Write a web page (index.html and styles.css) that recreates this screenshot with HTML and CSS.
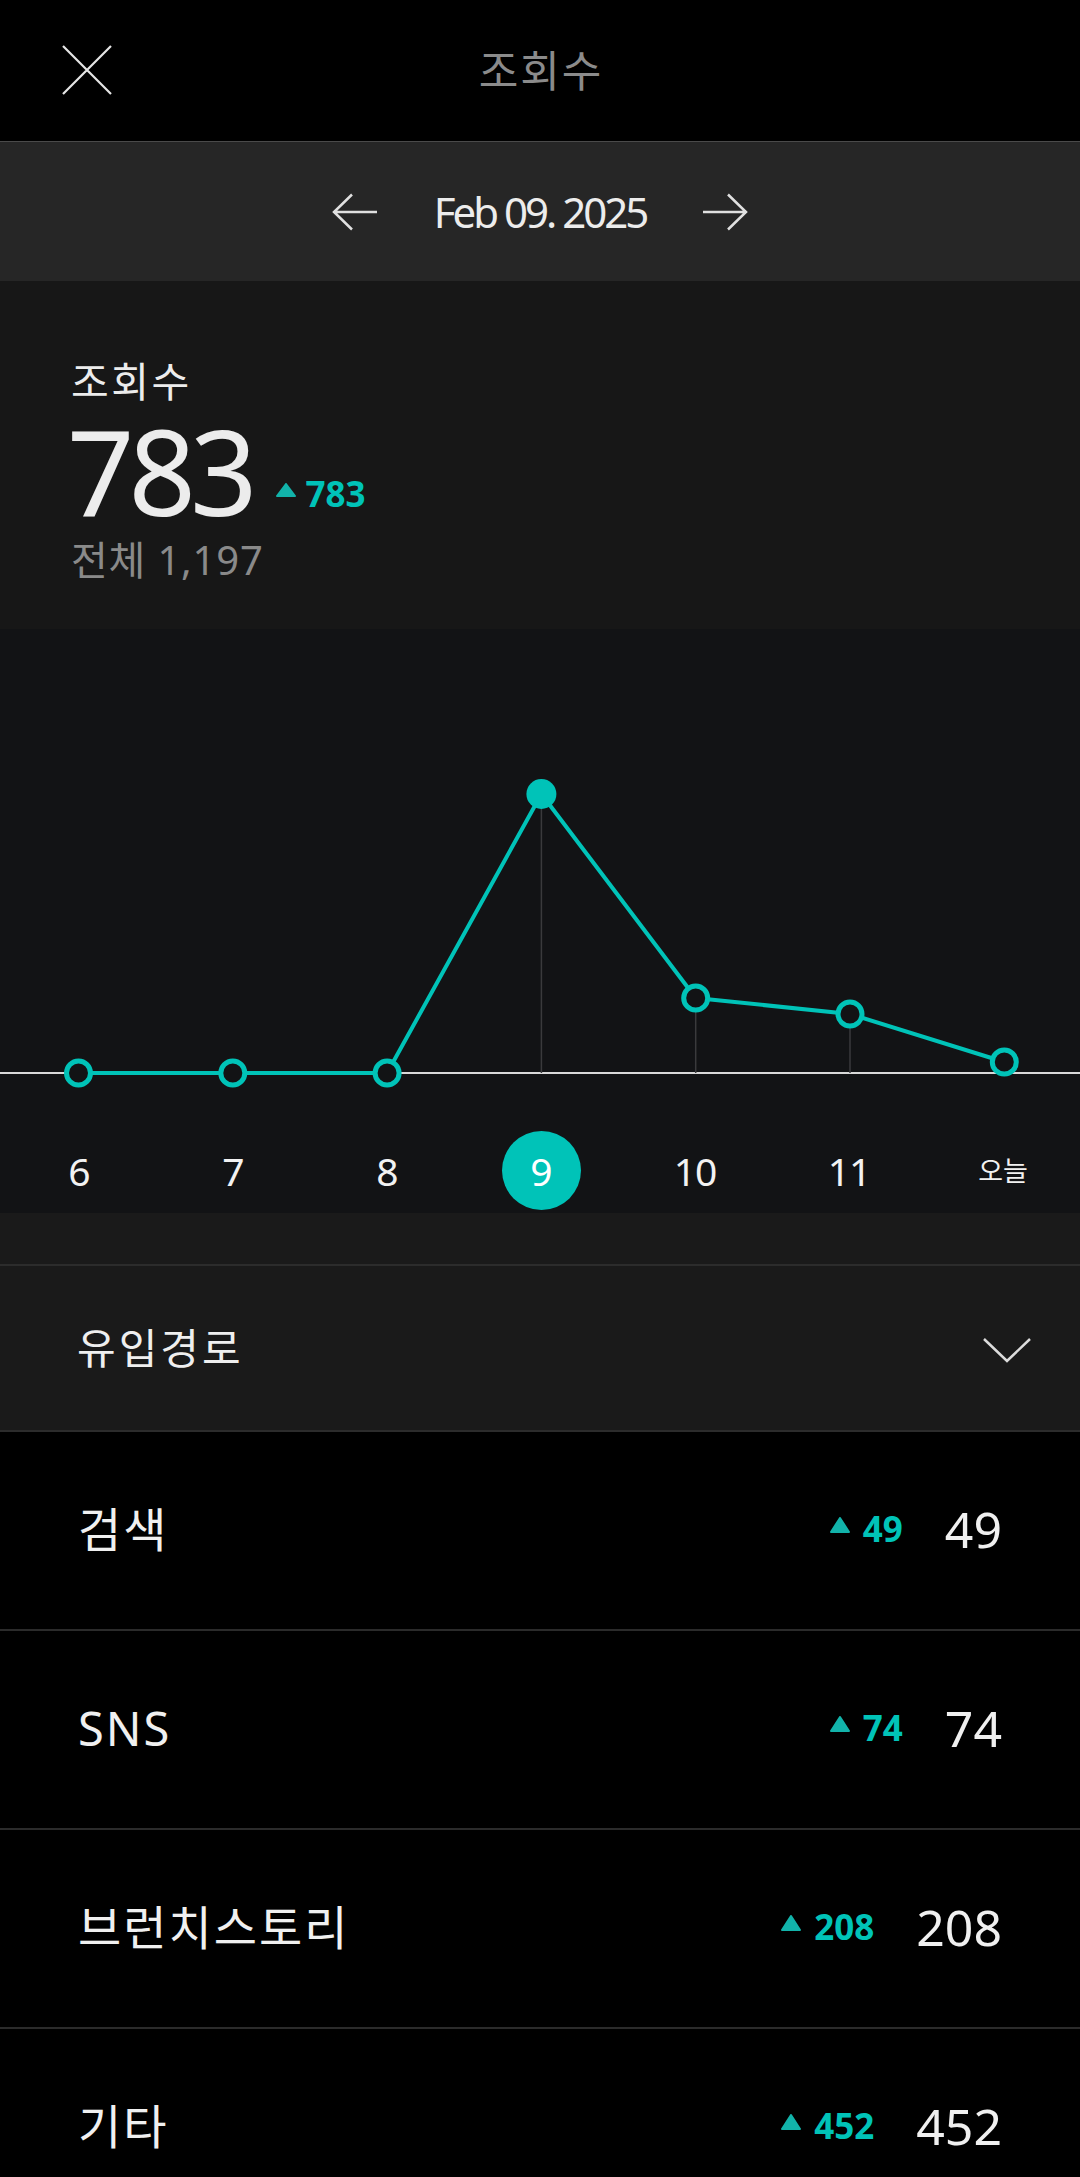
FILE: index.html
```html
<!DOCTYPE html>
<html lang="ko">
<head>
<meta charset="utf-8">
<title>조회수</title>
<link rel="stylesheet" href="styles.css">
</head>
<body>
<div class="app">
  <header class="topbar">
    <div class="close">
      <svg width="50" height="50" viewBox="0 0 50 50"><path d="M1 1 L49 49 M49 1 L1 49" stroke="#e6e6e6" stroke-width="2.2" fill="none"/></svg>
    </div>
    <h1 class="title">조회수</h1>
    <div></div>
  </header>

  <div class="datebar">
    <svg class="arrow" width="46" height="38" viewBox="0 0 46 38"><path d="M2 19 H45 M20 1.5 L2 19 L20 36.5" stroke="#e0e0e0" stroke-width="2.5" fill="none"/></svg>
    <span class="date">Feb 09. 2025</span>
    <svg class="arrow" width="46" height="38" viewBox="0 0 46 38"><path d="M44 19 H1 M26 1.5 L44 19 L26 36.5" stroke="#e0e0e0" stroke-width="2.5" fill="none"/></svg>
  </div>

  <section class="summary">
    <div class="sum-label">조회수</div>
    <div class="sum-value">
      <span class="big">783</span>
      <span class="delta"><svg class="tri tri-sum" width="20" height="14" viewBox="0 0 20 14"><polygon points="10,1 19,13 1,13" fill="#12b3aa" stroke="#12b3aa" stroke-width="2" stroke-linejoin="round"/></svg><span>783</span></span>
    </div>
    <div class="sum-total">전체 1,197</div>
  </section>

  <section class="chart">
    <svg class="plot" width="1080" height="470" viewBox="0 0 1080 470">
      <line x1="0" y1="444" x2="1080" y2="444" stroke="#d9d9d9" stroke-width="2"/>
      <line x1="541.4" y1="165" x2="541.4" y2="444" stroke="#3a3a3c" stroke-width="1.5"/>
      <line x1="695.7" y1="369" x2="695.7" y2="444" stroke="#3a3a3c" stroke-width="1.5"/>
      <line x1="850" y1="385" x2="850" y2="444" stroke="#3a3a3c" stroke-width="1.5"/>
      <polyline points="78.5,444 232.8,444 387.1,444 541.4,165 695.7,369 850,385 1004.3,433" fill="none" stroke="#00c3b8" stroke-width="4" stroke-linejoin="round"/>
      <g fill="#121315" stroke="#00c3b8" stroke-width="5">
        <circle cx="78.5" cy="444" r="12"/>
        <circle cx="232.8" cy="444" r="12"/>
        <circle cx="387.1" cy="444" r="12"/>
        <circle cx="695.7" cy="369" r="12"/>
        <circle cx="850" cy="385" r="12"/>
        <circle cx="1004.3" cy="433" r="12"/>
      </g>
      <circle cx="541.4" cy="165" r="15" fill="#00c3b8"/>
    </svg>
    <div class="days">
      <span class="day">6</span>
      <span class="day">7</span>
      <span class="day">8</span>
      <span class="day"><span class="bubble">9</span></span>
      <span class="day">10</span>
      <span class="day">11</span>
      <span class="day today">오늘</span>
    </div>
  </section>

  <div class="spacer"></div>

  <div class="inflow-head">
    <span class="inflow-title">유입경로</span>
    <svg class="chev" width="50" height="26" viewBox="0 0 50 26"><path d="M2 2 L25 24 L48 2" stroke="#dcdcdc" stroke-width="2.5" fill="none"/></svg>
  </div>

  <ul class="rows">
    <li class="row">
      <span class="name">검색</span>
      <span class="vals"><svg class="tri tri-row" width="20" height="16" viewBox="0 0 20 16"><polygon points="10,1 19,15 1,15" fill="#12b3aa" stroke="#12b3aa" stroke-width="2" stroke-linejoin="round"/></svg><span class="inc">49</span><span class="num">49</span></span>
    </li>
    <li class="row">
      <span class="name">SNS</span>
      <span class="vals"><svg class="tri tri-row" width="20" height="16" viewBox="0 0 20 16"><polygon points="10,1 19,15 1,15" fill="#12b3aa" stroke="#12b3aa" stroke-width="2" stroke-linejoin="round"/></svg><span class="inc">74</span><span class="num">74</span></span>
    </li>
    <li class="row">
      <span class="name">브런치스토리</span>
      <span class="vals"><svg class="tri tri-row" width="20" height="16" viewBox="0 0 20 16"><polygon points="10,1 19,15 1,15" fill="#12b3aa" stroke="#12b3aa" stroke-width="2" stroke-linejoin="round"/></svg><span class="inc">208</span><span class="num">208</span></span>
    </li>
    <li class="row">
      <span class="name">기타</span>
      <span class="vals"><svg class="tri tri-row" width="20" height="16" viewBox="0 0 20 16"><polygon points="10,1 19,15 1,15" fill="#12b3aa" stroke="#12b3aa" stroke-width="2" stroke-linejoin="round"/></svg><span class="inc">452</span><span class="num">452</span></span>
    </li>
  </ul>
</div>
</body>
</html>
```

FILE: styles.css
```css
* { box-sizing: border-box; }
html, body {
  margin: 0;
  padding: 0;
  background: #000;
}
body {
  font-family: "Noto Sans", "Noto Sans CJK KR", sans-serif;
  color: #eeeeee;
}
.app {
  width: 1080px;
  overflow: hidden;
}

/* top bar */
.topbar {
  height: 142px;
  background: #000;
  border-bottom: 1px solid #4a4a4a;
  display: grid;
  grid-template-columns: 1fr auto 1fr;
  align-items: center;
}
.close {
  padding-left: 62px;
  display: flex;
  align-items: center;
  padding-bottom: 2px;
}
.close svg { display: block; }
.title {
  margin: 0 0 0 2px;
  font-size: 43px;
  font-weight: 400;
  color: #8b8b8b;
  line-height: 50px;
  letter-spacing: 2px;
}

/* date bar */
.datebar {
  height: 139px;
  background: #262626;
  display: flex;
  align-items: center;
  justify-content: center;
  gap: 56px;
}
.arrow { display: block; }
.date {
  font-size: 42px;
  letter-spacing: -3px;
  color: #ececec;
  line-height: 50px;
}

/* summary */
.summary {
  height: 348px;
  background: #171717;
  padding: 76px 0 0 71px;
}
.sum-label {
  font-size: 41px;
  line-height: 48px;
  letter-spacing: 2.5px;
  color: #ececec;
}
.sum-value {
  display: flex;
  align-items: flex-end;
  margin-top: 7px;
}
.big {
  font-size: 118px;
  line-height: 118px;
  letter-spacing: -6px;
  color: #ececec;
  margin-left: -4px;
}
.delta {
  display: inline-flex;
  align-items: center;
  margin-left: 24px;
  margin-bottom: 19px;
  font-size: 35px;
  line-height: 34px;
  font-weight: 700;
  color: #00c3b8;
  gap: 10px;
}
.tri { display: block; }
.tri-sum { margin-bottom: 8px; }
.sum-total {
  margin-top: 7px;
  font-size: 40px;
  line-height: 46px;
  letter-spacing: 0.8px;
  color: #8a8a8a;
}

/* chart */
.chart {
  height: 584px;
  background: #121315;
}
.plot { display: block; }
.days {
  display: grid;
  grid-template-columns: repeat(7, 1fr);
  padding: 32px 0 3px 2px;
}
.day {
  height: 79px;
  display: flex;
  align-items: center;
  justify-content: center;
  font-size: 39px;
  letter-spacing: -1px;
  line-height: 79px;
  color: #f2f2f2;
}
.bubble {
  width: 79px;
  height: 79px;
  border-radius: 50%;
  background: #00c3b8;
  color: #fff;
  display: flex;
  align-items: center;
  justify-content: center;
}
.today {
  font-size: 27px;
  letter-spacing: 0;
}

/* spacer */
.spacer {
  height: 53px;
  background: #1a1a1a;
  border-bottom: 2px solid #2c2c2c;
}

/* inflow header */
.inflow-head {
  height: 166px;
  background: #1a1a1a;
  border-bottom: 2px solid #2c2c2c;
  display: flex;
  align-items: center;
  justify-content: space-between;
  padding: 0 48px 0 77px;
}
.inflow-title {
  font-size: 42px;
  line-height: 48px;
  letter-spacing: 3px;
  color: #efefef;
}
.chev { display: block; margin-top: 4px; }

/* rows */
.rows {
  list-style: none;
  margin: 0;
  padding: 0;
}
.row {
  height: 199px;
  border-bottom: 2px solid #2b2b2b;
  display: flex;
  align-items: center;
  justify-content: space-between;
  padding: 0 78px 4px 78px;
  background: #000;
}
.name {
  font-size: 47px;
  line-height: 56px;
  letter-spacing: 2px;
  color: #f0f0f0;
}
.vals {
  display: flex;
  align-items: center;
}
.tri-row { margin-right: 13px; margin-bottom: 8px; }
.inc {
  font-size: 35px;
  line-height: 40px;
  font-weight: 700;
  color: #00c3b8;
  margin-right: 42px;
}
.num {
  font-size: 50px;
  line-height: 56px;
  color: #f0f0f0;
}
```
